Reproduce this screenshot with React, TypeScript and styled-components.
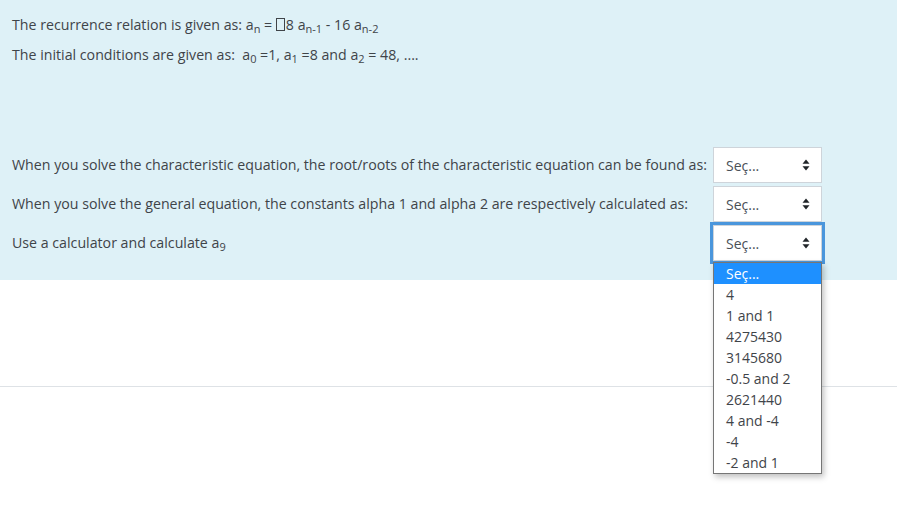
import React from 'react';
import styled, { createGlobalStyle } from 'styled-components';

const GlobalStyle = createGlobalStyle`
  html, body {
    margin: 0;
    padding: 0;
    background: #ffffff;
  }
  body {
    font-family: 'Open Sans', 'Noto Sans', sans-serif;
    color: #3f4449;
  }
`;

const options = [
  'Seç...',
  '4',
  '1 and 1',
  '4275430',
  '3145680',
  '-0.5 and 2',
  '2621440',
  '4 and -4',
  '-4',
  '-2 and 1',
];

const questions = [
  { text: 'When you solve the characteristic equation, the root/roots of the characteristic equation can be found as:' },
  { text: 'When you solve the general equation, the constants alpha 1 and alpha 2 are respectively calculated as:' },
  { text: 'Use a calculator and calculate a', sub: '9', focused: true },
];

const Arrows = () => (
  <svg width="8" height="12" viewBox="0 0 8 12">
    <path d="M4 0.5 L7.5 4.8 L0.5 4.8 Z" fill="#212529" />
    <path d="M4 11.5 L7.5 7.2 L0.5 7.2 Z" fill="#212529" />
  </svg>
);

const App: React.FC = () => {
  return (
    <Page>
      <GlobalStyle />
      <Formulation>
        <Line>
          The recurrence relation is given as: a<Sub>n</Sub> = <Missing />8 a<Sub>n-1</Sub> - 16 a<Sub>n-2</Sub>
        </Line>
        <Line>
          The initial conditions are given as:&nbsp; a<Sub>0</Sub> =1, a<Sub>1</Sub> =8 and a<Sub>2</Sub> = 48, ....
        </Line>
        <Answers>
          {questions.map((q, i) => (
            <React.Fragment key={i}>
              <Label>
                {q.text}
                {q.sub && <Sub>{q.sub}</Sub>}
              </Label>
              <SelectCell>
                <SelectBox $focused={!!q.focused}>
                  <span>Seç...</span>
                  <Arrows />
                </SelectBox>
                {q.focused && (
                  <OptionList>
                    {options.map((o, j) => (
                      <OptionItem key={j} $active={j === 0}>
                        {o}
                      </OptionItem>
                    ))}
                  </OptionList>
                )}
              </SelectCell>
            </React.Fragment>
          ))}
        </Answers>
      </Formulation>
      <Divider />
    </Page>
  );
};

export default App;

const Page = styled.div`
  width: 897px;
  height: 525px;
  overflow: hidden;
  background: #ffffff;
`;

const Formulation = styled.div`
  background-color: #def1f7;
  height: 280px;
  box-sizing: border-box;
  padding: 15px 0 0 12px;
`;

const Line = styled.p`
  margin: 0 0 10px 0;
  font-size: 14.2px;
  line-height: 20px;
  color: #3f4449;
`;

const Sub = styled.span`
  font-size: 11px;
  vertical-align: -3px;
  line-height: 0;
`;

const Missing = styled.span`
  display: inline-block;
  width: 7px;
  height: 11px;
  border: 1px solid #3f4449;
  margin-right: 1px;
  vertical-align: -1px;
`;

const Answers = styled.div`
  display: grid;
  grid-template-columns: 701px 110px;
  row-gap: 3px;
  margin-top: 82px;
  align-items: center;
`;

const Label = styled.div`
  font-size: 14.2px;
  line-height: 20px;
  color: #3f4449;
`;

const SelectCell = styled.div`
  position: relative;
  height: 36px;
`;

const SelectBox = styled.div<{ $focused: boolean }>`
  box-sizing: border-box;
  width: 109px;
  height: 36px;
  background: #ffffff;
  border: 1px solid #ced4da;
  display: flex;
  align-items: center;
  justify-content: space-between;
  padding: 0 11px 0 12px;
  font-size: 14px;
  color: #495057;
  box-shadow: ${(p) => (p.$focused ? '0 0 0 3px #4a96dc' : 'none')};
`;

const OptionList = styled.div`
  position: absolute;
  top: 37px;
  left: 0;
  width: 109px;
  box-sizing: border-box;
  background: #ffffff;
  border: 1px solid #767676;
  box-shadow: 2px 3px 6px rgba(0, 0, 0, 0.25);
  z-index: 2;
`;

const OptionItem = styled.div<{ $active: boolean }>`
  height: 21px;
  line-height: 21px;
  padding-left: 12px;
  font-size: 14px;
  color: ${(p) => (p.$active ? '#ffffff' : '#3f4449')};
  background: ${(p) => (p.$active ? '#1e90ff' : 'transparent')};
`;

const Divider = styled.hr`
  margin: 106px 0 0 0;
  border: 0;
  border-top: 1px solid #dee2e6;
`;
